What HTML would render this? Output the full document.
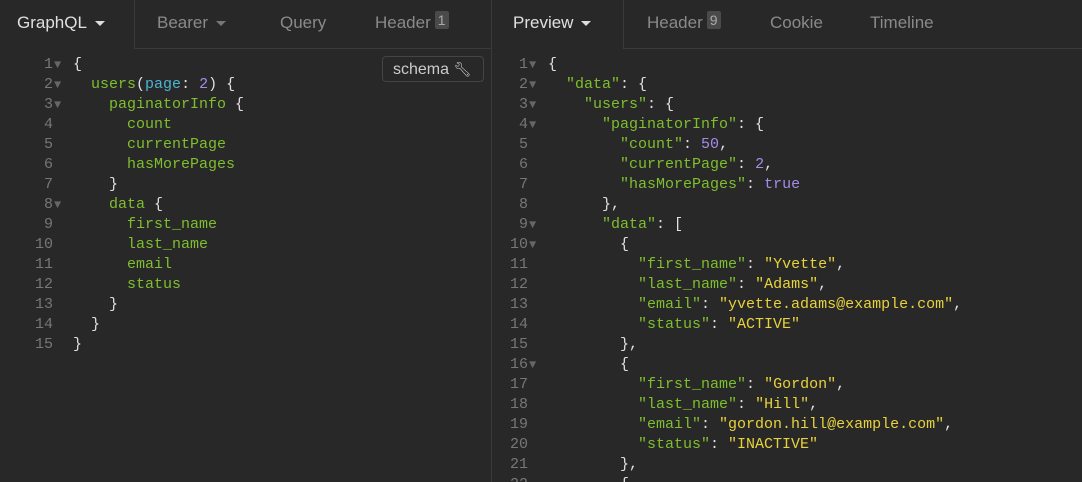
<!DOCTYPE html>
<html><head><meta charset="utf-8"><style>
*{margin:0;padding:0;box-sizing:border-box}
html,body{width:1082px;height:482px;overflow:hidden}
body{background:#282828;position:relative;font-family:"Liberation Sans",sans-serif}
.tab{position:absolute;top:0;height:49px;font-size:17px;color:#8a8a8a;line-height:45px}
.act{color:#e0e0e0}
.line{position:absolute;height:1px;background:#3a3a3a}
.vl{position:absolute;width:1px;background:#3a3a3a}
.caret{display:inline-block;width:0;height:0;border-left:5px solid transparent;border-right:5px solid transparent;border-top:5px solid #ddd;vertical-align:middle;margin-left:8px}
.badge{display:inline-block;position:relative;top:-4px;background:#4a4a4a;color:#aaa;font-size:14px;line-height:18px;padding:0 3px;border-radius:2px;margin-left:4px;vertical-align:middle}
.code{position:absolute;top:55px;font-family:"Liberation Mono",monospace;font-size:15px;line-height:20px;white-space:pre;color:#e0e0e0}
.gut{position:absolute;top:55px;font-family:"Liberation Mono",monospace;font-size:15px;line-height:20px;white-space:pre;color:#777;text-align:right}
.g{color:#7ebf2e}.b{color:#4ab5d4}.p{color:#a58be8}.y{color:#e8d23c}
.ar{color:#666;font-size:12px;display:inline-block;height:20px;line-height:20px;vertical-align:top}
.schema{position:absolute;left:382px;top:56px;width:102px;height:26px;border:1px solid #444;border-radius:4px;color:#ccc;font-size:16px;line-height:24px;padding-left:10px}
</style></head><body>
<div class="tab act" style="left:17px">GraphQL<span class="caret"></span></div>
<div class="tab" style="left:157px">Bearer<span class="caret" style="border-top-color:#777"></span></div>
<div class="tab" style="left:280px">Query</div>
<div class="tab" style="left:375px">Header<span class="badge">1</span></div>
<div class="vl" style="left:134px;top:0;height:49px"></div>
<div class="line" style="left:134px;top:48px;width:357px"></div>
<div class="vl" style="left:491px;top:0;height:482px"></div>
<div class="tab act" style="left:513px">Preview<span class="caret"></span></div>
<div class="tab" style="left:647px">Header<span class="badge">9</span></div>
<div class="tab" style="left:770px">Cookie</div>
<div class="tab" style="left:870px">Timeline</div>
<div class="vl" style="left:623px;top:0;height:49px"></div>
<div class="line" style="left:623px;top:48px;width:459px"></div>
<div class="schema">schema <span style="font-size:14px">🔧︎</span></div>

<div class="gut" style="left:20px;width:33px">1
2
3
4
5
6
7
8
9
10
11
12
13
14
15</div>
<div class="gut" style="left:54px;text-align:left"><span class="ar">▼</span>
<span class="ar">▼</span>
<span class="ar">▼</span>




<span class="ar">▼</span></div>
<div class="code" style="left:73px">{
  <span class="g">users</span>(<span class="b">page</span>: <span class="p">2</span>) {
    <span class="g">paginatorInfo</span> {
      <span class="g">count</span>
      <span class="g">currentPage</span>
      <span class="g">hasMorePages</span>
    }
    <span class="g">data</span> {
      <span class="g">first_name</span>
      <span class="g">last_name</span>
      <span class="g">email</span>
      <span class="g">status</span>
    }
  }
}</div>

<div class="gut" style="left:500px;width:28px">1
2
3
4
5
6
7
8
9
10
11
12
13
14
15
16
17
18
19
20
21
22</div>
<div class="gut" style="left:529px;text-align:left"><span class="ar">▼</span>
<span class="ar">▼</span>
<span class="ar">▼</span>
<span class="ar">▼</span>




<span class="ar">▼</span>
<span class="ar">▼</span>





<span class="ar">▼</span></div>
<div class="code" style="left:548px">{
  <span class="g">"data"</span>: {
    <span class="g">"users"</span>: {
      <span class="g">"paginatorInfo"</span>: {
        <span class="g">"count"</span>: <span class="p">50</span>,
        <span class="g">"currentPage"</span>: <span class="p">2</span>,
        <span class="g">"hasMorePages"</span>: <span class="p">true</span>
      },
      <span class="g">"data"</span>: [
        {
          <span class="g">"first_name"</span>: <span class="y">"Yvette"</span>,
          <span class="g">"last_name"</span>: <span class="y">"Adams"</span>,
          <span class="g">"email"</span>: <span class="y">"yvette.adams@example.com"</span>,
          <span class="g">"status"</span>: <span class="y">"ACTIVE"</span>
        },
        {
          <span class="g">"first_name"</span>: <span class="y">"Gordon"</span>,
          <span class="g">"last_name"</span>: <span class="y">"Hill"</span>,
          <span class="g">"email"</span>: <span class="y">"gordon.hill@example.com"</span>,
          <span class="g">"status"</span>: <span class="y">"INACTIVE"</span>
        },
        {</div>
</body></html>
